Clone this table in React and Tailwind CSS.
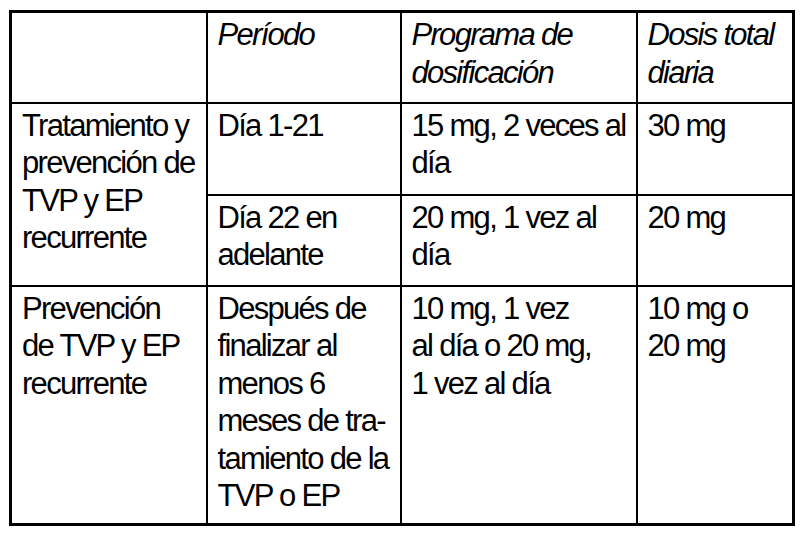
const cell = "border-2 border-black align-top pl-[10px] pr-1 pt-[3px] whitespace-nowrap";

function Lines({ items }) {
  return items.map((l, i) => (
    <span key={i} className="block">{l}</span>
  ));
}

export default function App() {
  return (
    <div className="w-[800px] h-[535px] bg-white pt-[10px] pl-[9px] text-black"
      style={{ fontFamily: '"Liberation Sans", Arial, sans-serif' }}>
      <table className="border-collapse border-[3px] border-black text-[31px] leading-[37.6px] tracking-[-0.055em] table-fixed w-[783px]">
        <colgroup>
          <col className="w-[196px]" />
          <col className="w-[194px]" />
          <col className="w-[236px]" />
          <col className="w-[157px]" />
        </colgroup>
        <tbody>
          <tr className="h-[91px] italic">
            <td className={cell}></td>
            <td className={cell}><Lines items={["Período"]} /></td>
            <td className={cell}><Lines items={["Programa de", "dosificación"]} /></td>
            <td className={cell}><Lines items={["Dosis total", "diaria"]} /></td>
          </tr>
          <tr className="h-[92px]">
            <td className={cell} rowSpan={2}>
              <Lines items={["Tratamiento y", "prevención de", "TVP y EP", "recurrente"]} />
            </td>
            <td className={cell}><Lines items={["Día 1-21"]} /></td>
            <td className={cell}><Lines items={["15 mg, 2 veces al", "día"]} /></td>
            <td className={cell}><Lines items={["30 mg"]} /></td>
          </tr>
          <tr className="h-[91px]">
            <td className={cell}><Lines items={["Día 22 en", "adelante"]} /></td>
            <td className={cell}><Lines items={["20 mg, 1 vez al", "día"]} /></td>
            <td className={cell}><Lines items={["20 mg"]} /></td>
          </tr>
          <tr className="h-[239px]">
            <td className={cell}><Lines items={["Prevención", "de TVP y EP", "recurrente"]} /></td>
            <td className={cell}>
              <Lines items={["Después de", "finalizar al", "menos 6", "meses de tra-", "tamiento de la", "TVP o EP"]} />
            </td>
            <td className={cell}><Lines items={["10 mg, 1 vez", "al día o 20 mg,", "1 vez al día"]} /></td>
            <td className={cell}><Lines items={["10 mg o", "20 mg"]} /></td>
          </tr>
        </tbody>
      </table>
    </div>
  );
}
